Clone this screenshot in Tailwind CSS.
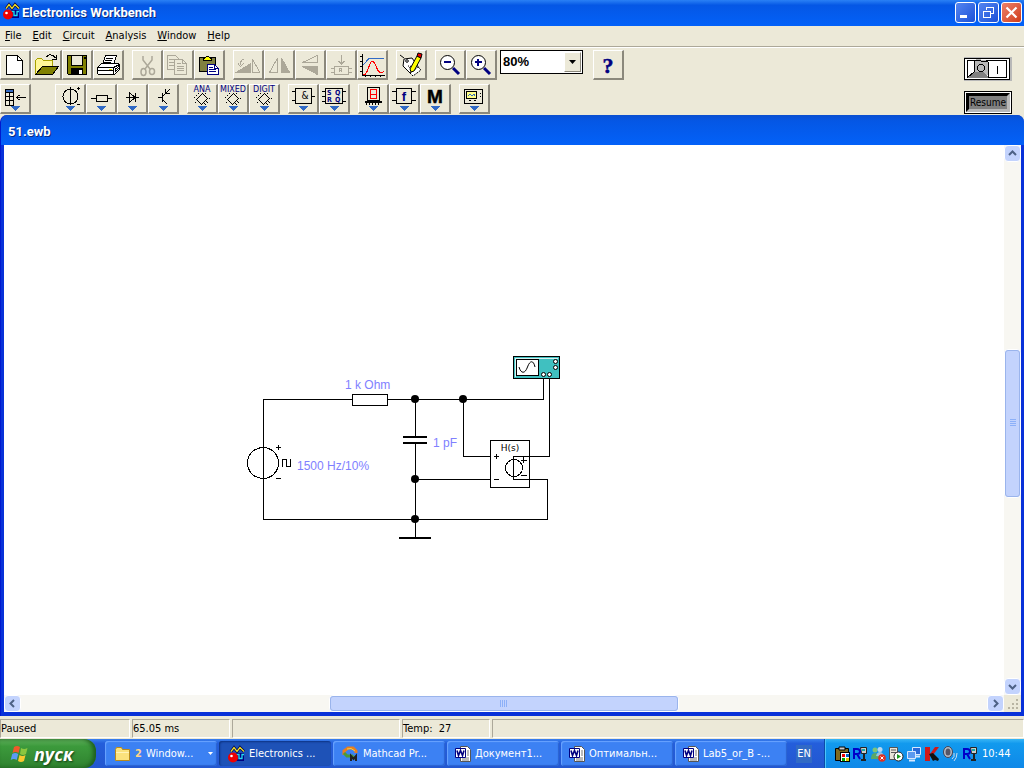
<!DOCTYPE html>
<html lang="en">
<head>
    <meta charset="UTF-8">
    <meta name="viewport" content="width=device-width, initial-scale=1.0">
    <title>Electronics Workbench</title>
    <script src="https://cdn.jsdelivr.net/npm/@tailwindcss/browser@4"></script>
</head>
<body class="h-screen flex flex-col overflow-hidden bg-[#ece9d8] text-black text-[11px] leading-[14px] font-['DejaVu_Sans_Condensed','DejaVu_Sans',sans-serif]">

    <!-- Shared symbols -->
    <svg class="hidden" aria-hidden="true">
        <symbol id="drop" viewBox="0 0 31 30"><path d="M11 22h9v1h-1v1h-1v1h-1v1h-1v1h-1v-1h-1v-1h-1v-1h-1v-1h-1z" fill="#316ac5"/></symbol>
        <symbol id="chip" viewBox="0 0 31 30">
            <g fill="none" stroke="#000" shape-rendering="crispEdges"><path d="M15.500 9.500l5 5-6 6-5-5z"/><path d="M12 10l-1-1M10 12l-1-1M8 14l-1-1M18 10l1-1M22 14l1 1M19 17l2 2M17 19l2 2M9 18l-1 1"/></g>
        </symbol>
        <symbol id="app" viewBox="0 0 18 18">
            <path d="M9 8h8v8H9z" fill="#000080"/>
            <path d="M4 6.500l3-4 3 4 3-4 4 4" fill="none" stroke="#000050" stroke-width="2.800"/>
            <path d="M4 6.500l3-4 3 4 3-4 4 4" fill="none" stroke="#f0e020" stroke-width="1.300"/>
            <path d="M9 9.500h3v4h3v-4h2" fill="none" stroke="#20e0f0" stroke-width="1.300"/>
            <circle cx="6" cy="12.500" r="5" fill="#e00"/><circle cx="4.500" cy="11" r="1.300" fill="#fff"/>
        </symbol>
        <symbol id="word" viewBox="0 0 16 16">
            <path d="M5.500.5h7l3 3v12h-10z" fill="#fff" stroke="#555"/>
            <path d="M12 5h2M12 7h2M12 9h2M7 12h7M7 14h7" stroke="#777"/>
            <path d="M.5 2.500h10v9H.5z" fill="#fff" stroke="#000080"/>
            <path d="M2 4.500l1.500 5 2-5 2 5 1.500-5" fill="none" stroke="#000080" stroke-width="1.600"/>
        </symbol>
        <symbol id="rj" viewBox="0 0 16 16">
            <path d="M8.500 1.500h6v6h-5z" fill="#ccc" stroke="#222"/><path d="M10 3h3v2h-3z" fill="#1aa"/>
            <path d="M12 8v6M9 14h5" stroke="#222" stroke-width="2"/>
            <path d="M2 13V3h3q3 0 3 2.500T5 8H2M5 8l3 5" fill="none" stroke="#0000c8" stroke-width="2"/>
        </symbol>
    </svg>

    <!-- Title bar -->
    <header class="h-[26px] shrink-0 flex items-center pl-0.5 pr-0.5 bg-linear-to-b from-[#2a80f5] via-[#0557e5] via-20% to-[#0361f8]">
        <svg class="size-[18px] mr-0.5 -mt-1" aria-hidden="true"><use href="#app"/></svg>
        <h1 class="grow text-white text-[13px] font-bold font-['Roboto',sans-serif] [text-shadow:1px_1px_#0a2a80]">Electronics Workbench</h1>
        <div class="flex gap-0.5 pb-px">
            <button aria-label="Minimize" class="size-[21px] rounded-[3px] border border-white bg-linear-to-br from-[#5585f0] to-[#1b50d8]"><svg viewBox="0 0 19 19"><path d="M4 12h7v3H4z" fill="#fff"/></svg></button>
            <button aria-label="Restore" class="size-[21px] rounded-[3px] border border-white bg-linear-to-br from-[#5585f0] to-[#1b50d8]"><svg viewBox="0 0 19 19" fill="none" stroke="#fff" shape-rendering="crispEdges"><path d="M4.500 8.500h7v6h-7zM4 8h8M7.500 7V4.500h7v6H12M7 4h8"/></svg></button>
            <button aria-label="Close" class="size-[21px] rounded-[3px] border border-white bg-linear-to-br from-[#ec8068] to-[#d03a14]"><svg viewBox="0 0 19 19"><path d="M4.500 4.500l10 10m0-10l-10 10" stroke="#fff" stroke-width="2.200"/></svg></button>
        </div>
    </header>

    <!-- Menu -->
    <nav class="h-[21px] shrink-0 flex items-center gap-[11px] pl-[5px] pb-px border-b border-[#aca899]">
        <a href="#"><u>F</u>ile</a>
        <a href="#"><u>E</u>dit</a>
        <a href="#"><u>C</u>ircuit</a>
        <a href="#"><u>A</u>nalysis</a>
        <a href="#"><u>W</u>indow</a>
        <a href="#"><u>H</u>elp</a>
    </nav>

    <!-- Toolbars -->
    <div class="shrink-0 flex justify-between border-t border-white pt-0.5 pr-3 pb-px">
        <div class="flex flex-col gap-1 [&_button]:block [&_button]:w-[31px] [&_button]:h-[30px] [&_button]:border-t [&_button]:border-l [&_button]:border-r-2 [&_button]:border-b-2 [&_button]:border-t-white [&_button]:border-l-white [&_button]:border-r-[#8b887c] [&_button]:border-b-[#8b887c] [&_button>svg]:w-[31px] [&_button>svg]:h-[30px] [&_button>svg]:-m-px [&_svg]:max-w-none [&_svg]:overflow-visible">
            <div class="flex gap-2">
                <div class="flex">
                    <button aria-label="New"><svg viewBox="0 0 31 30" shape-rendering="crispEdges"><path d="M6.500 5.500h11l5 5v14h-16z" fill="#fff" stroke="#000"/><path d="M17.500 5.500v5h5" fill="none" stroke="#000"/></svg></button>
                    <button aria-label="Open"><svg viewBox="0 0 31 30" shape-rendering="crispEdges"><path d="M4.500 24V10.500l2-2h4l2 2h9V16" fill="#fff799" stroke="#a8a000"/><path d="M4.500 24.500l7-8h16l-6 8z" fill="#808000" stroke="#000"/><path d="M15.500 7q4-5 9 1M25.500 5v4H21" fill="none" stroke="#000"/></svg></button>
                    <button aria-label="Save"><svg viewBox="0 0 31 30" shape-rendering="crispEdges"><path d="M5.500 5.500h19v19h-18l-1-1z" fill="#808000" stroke="#000"/><path d="M9.500 5.500h11v10h-11z" fill="#ece9d8" stroke="#000"/><path d="M9 18h12v7H9z" fill="#000"/><path d="M17 20h3v4h-3z" fill="#fff"/><path d="M22 7h2v2h-2z"/></svg></button>
                    <button aria-label="Print"><svg viewBox="0 0 31 30" shape-rendering="crispEdges" stroke="#000"><path d="M9.500 14.500l3-9h11l-3 9" fill="#fff"/><path d="M13 8.500h7M12 10.500h7M11 12.500h7" /><path d="M4.500 17.500l4-4h17l1 2v4l-5 5h-16l-1-1z" fill="#fff"/><path d="M4.500 17.500h16l6-3M20.500 17.500v7M5 20.500h15M22 21.500l5-4M22 19.500l5-4" fill="none"/><path d="M16 19.500h3" stroke="#dd0"/></svg></button>
                </div>
                <div class="flex">
                    <button aria-label="Cut"><svg viewBox="0 0 31 30" fill="none" stroke="#aca899" stroke-width="1.500"><path d="M11 6v4l7 9M20 6v4l-7 9"/><ellipse cx="11.500" cy="22" rx="2.500" ry="3.500"/><ellipse cx="20" cy="21.500" rx="2.500" ry="3"/></svg></button>
                    <button aria-label="Copy"><svg viewBox="0 0 31 30" fill="#ece9d8" stroke="#aca899" shape-rendering="crispEdges"><path d="M4.500 5.500h8l4 4v10h-12zM6 9.500h5M6 12.500h7M6 15.500h7"/><path d="M11.500 9.500h8l4 4v11h-12zM19.500 9.500v4h4M14 13.500h4M14 16.500h7M14 18.500h7M14 20.500h7"/></svg></button>
                    <button aria-label="Paste"><svg viewBox="0 0 31 30" shape-rendering="crispEdges"><path d="M5.500 7.500h16v14h-16z" fill="#808040" stroke="#000"/><path d="M9.500 10.500v-2l2-1 1-1h2l1 1 2 1v2z" fill="#ff0" stroke="#000"/><path d="M13.500 14.500h7l4 4v6h-11z" fill="#fff" stroke="#000080"/><path d="M20.500 14.500v4h4M15 17.500h4M15 19.500h7M15 21.500h7" stroke="#000080" fill="none"/></svg></button>
                </div>
                <div class="flex">
                    <button aria-label="Rotate"><svg viewBox="0 0 31 30" fill="none" stroke="#aca899" shape-rendering="crispEdges"><path d="M4 22l13-8v8z" fill="#aca899"/><path d="M19.500 22V9l7 13zM11 9.500H9.500L7.500 12v3M5 13.500l2.500 3 3-3"/></svg></button>
                    <button aria-label="Flip horizontal"><svg viewBox="0 0 31 30" fill="none" stroke="#aca899" shape-rendering="crispEdges"><path d="M13.500 8v14.500h-8z"/><path d="M17.500 8v14.500h8z" fill="#aca899"/></svg></button>
                    <button aria-label="Flip vertical"><svg viewBox="0 0 31 30" fill="none" stroke="#aca899" shape-rendering="crispEdges"><path d="M22.500 5.500v7h-15z"/><path d="M22.500 24.500v-8h-15z" fill="#aca899"/></svg></button>
                    <button aria-label="Create subcircuit"><svg viewBox="0 0 31 30" fill="none" stroke="#aca899" shape-rendering="crispEdges"><path d="M15.500 5v9M12.500 11l3 3 3-3M8.500 16.500h14v8h-14zM5 18.500h3M5 22.500h3M23 18.500h3M23 22.500h3M13.500 22v-4h2v4M13 20.500h3"/></svg></button>
                    <button aria-label="Display graphs"><svg viewBox="0 0 31 30" fill="none" shape-rendering="crispEdges"><path d="M5.500 4v21.500H28M3 6.500h2M3 11.500h2M3 16.500h2M3 21.500h2M8.500 25v2M13.500 25v2M18.500 25v2M23.500 25v2" stroke="#000"/><path d="M6 15l6-6.500h15" stroke="#316ac5"/><path d="M6 24.500h2q2-2 4-8t4-5 4 7 7 3" stroke="#f00"/></svg></button>
                </div>
                <button aria-label="Component properties"><svg viewBox="0 0 31 30" stroke="#000"><path d="M4 5l4 3" /><path d="M8 9l8-1 7 10-8 6-8-8z" fill="#fff"/><circle cx="11" cy="11" r="1.300" fill="#fff"/><path d="M12 16l8 1M13 18l6-5" stroke-dasharray="1 1"/><path d="M14 23l8-6 3 3-8 6z" fill="#fff" stroke-dasharray="2 1"/><path d="M21 6l4 2-7 13-3 1-1-3z" fill="#ff0"/><path d="M21 6l1-3 4 1-1 4z" fill="#e00"/></svg></button>
                <div class="flex">
                    <button aria-label="Zoom out"><svg viewBox="0 0 31 30"><path d="M18 18l6 6" stroke="#000080" stroke-width="3"/><circle cx="12.500" cy="12.500" r="7" fill="#fff" stroke="#000"/><path d="M9 12h7" stroke="#000080" stroke-width="2"/></svg></button>
                    <button aria-label="Zoom in"><svg viewBox="0 0 31 30"><path d="M18 18l6 6" stroke="#000080" stroke-width="3"/><circle cx="12.500" cy="12.500" r="7" fill="#fff" stroke="#000"/><path d="M9 12h7M12 9v7" stroke="#000080" stroke-width="2"/></svg></button>
                </div>
                <div class="relative w-[83px] h-6 -ml-[5px]">
                    <select aria-label="Zoom level" class="block appearance-none w-full h-full bg-white border border-black pl-0.5 text-[13px] font-bold font-['Liberation_Sans',sans-serif]">
                        <option>80%</option>
                        <option>100%</option>
                    </select>
                    <span class="absolute top-0.5 right-0.5 w-[17px] h-5 flex items-center justify-center bg-[#ece9d8] border border-l-white border-t-white border-r-[#8b887c] border-b-[#8b887c] pointer-events-none"><svg class="w-[7px] h-1" viewBox="0 0 7 4"><path d="M0 0h7L3.500 4z"/></svg></span>
                </div>
                <button aria-label="Help" class="ml-0.5"><svg viewBox="0 0 31 30"><text x="15" y="23" text-anchor="middle" fill="#000080" stroke="#000080" stroke-width="0.500" class="text-[22px] font-bold font-['Liberation_Serif',serif]">?</text></svg></button>
            </div>

            <div class="flex gap-2">
                <button aria-label="Favorites" class="mr-4"><svg viewBox="0 0 31 30" shape-rendering="crispEdges"><path d="M5 5h9v3H5z" fill="#316ac5"/><path d="M5.500 5.500h8v16h-8zM5 8.500h9M5 12.500h9M5 16.500h9M9.500 8v14M17 13.500h9M19.500 11l-3 2.500 3 2.500" fill="none" stroke="#000"/><use href="#drop"/></svg></button>
                <div class="flex">
                    <button aria-label="Sources"><svg viewBox="0 0 31 30"><g fill="none" stroke="#000" shape-rendering="crispEdges"><circle cx="15.500" cy="12.500" r="7.500"/><path d="M15.500 3v18M22 4.500h3M23.500 3v3M22 20.500h3"/></g><use href="#drop"/></svg></button>
                    <button aria-label="Basic"><svg viewBox="0 0 31 30" shape-rendering="crispEdges"><path d="M10.500 11.500h11v6h-11zM5 14.500h5M22 14.500h4" fill="none" stroke="#000"/><use href="#drop"/></svg></button>
                    <button aria-label="Diodes"><svg viewBox="0 0 31 30"><path d="M9 13.500h13M12.500 9v9l6-4.500zM18.500 9v9" fill="none" stroke="#000" shape-rendering="crispEdges"/><use href="#drop"/></svg></button>
                    <button aria-label="Transistors"><svg viewBox="0 0 31 30"><path d="M10 13.500h4M14.500 9v9M15 12l5-5M15 16l4 4M17.500 5v4H22M20 7l2-2" fill="none" stroke="#000" shape-rendering="crispEdges"/><use href="#drop"/></svg></button>
                </div>
                <div class="flex text-[8px] [&_text]:fill-[#000080] font-['DejaVu_Sans',sans-serif]">
                    <button aria-label="Analog ICs"><svg viewBox="0 0 31 30"><text x="15" y="8" text-anchor="middle">ANA</text><use href="#chip"/><use href="#drop"/></svg></button>
                    <button aria-label="Mixed ICs"><svg viewBox="0 0 31 30"><text x="15" y="8" text-anchor="middle">MIXED</text><use href="#chip"/><use href="#drop"/></svg></button>
                    <button aria-label="Digital ICs"><svg viewBox="0 0 31 30"><text x="15" y="8" text-anchor="middle">DIGIT</text><use href="#chip"/><use href="#drop"/></svg></button>
                </div>
                <div class="flex">
                    <button aria-label="Logic gates"><svg viewBox="0 0 31 30" shape-rendering="crispEdges"><path d="M7.500 4.500h16v15h-16zM4 7.500h3M4 16.500h3M24 12.500h3" fill="none" stroke="#000"/><text x="17" y="15" text-anchor="middle" class="text-[10px]">&amp;</text><use href="#drop"/></svg></button>
                    <button aria-label="Digital"><svg viewBox="0 0 31 30" shape-rendering="crispEdges"><path d="M6.500 4.500h17v15h-17zM3 7.500h3M3 12.500h3M3 17.500h3M24 7.500h3M24 17.500h3" fill="none" stroke="#000"/><g fill="#000080" class="text-[7px] font-bold"><text x="8" y="11">S</text><text x="16" y="11">Q</text><text x="8" y="18">R</text><text x="16" y="18">Q</text></g><use href="#drop"/></svg></button>
                </div>
                <div class="flex">
                    <button aria-label="Indicators"><svg viewBox="0 0 31 30" shape-rendering="crispEdges" fill="none"><path d="M9.500 3.500h12v13h-12z" stroke="#000"/><path d="M12.500 5.500h6v9h-6zM13 10.500h6" stroke="#f00"/><path d="M7 18h17" stroke="#000" stroke-width="2"/><path d="M8.500 19v2M11.500 19v2M14.500 19v2M17.500 19v2M20.500 19v2" stroke="#000"/><use href="#drop"/></svg></button>
                    <button aria-label="Controls"><svg viewBox="0 0 31 30" shape-rendering="crispEdges"><path d="M7.500 4.500h15v15h-15zM3 7.500h4M3 16.500h4M23 7.500h4M23 16.500h4" fill="none" stroke="#000"/><text x="15" y="17" text-anchor="middle" fill="#000080" class="text-[13px] font-bold font-['Liberation_Sans',sans-serif]">f</text><use href="#drop"/></svg></button>
                    <button aria-label="Miscellaneous"><svg viewBox="0 0 31 30"><text x="15" y="19" text-anchor="middle" stroke="#000" stroke-width="0.500" class="text-[19px] font-bold font-['Liberation_Sans',sans-serif]">M</text><use href="#drop"/></svg></button>
                </div>
                <button aria-label="Instruments"><svg viewBox="0 0 31 30" shape-rendering="crispEdges"><path d="M5.500 5.500h18v14h-18z" fill="none" stroke="#000"/><path d="M7.500 7.500h10v7h-10z" fill="#ff8" stroke="#000"/><path d="M9 12l2-2 2 2 2-2 1 2" fill="none" stroke="#316ac5"/><path d="M21 9h1v1h-1zM21 12h1v1h-1zM10 16h2v1h-2zM15 16h2v1h-2z"/><use href="#drop"/></svg></button>
            </div>
        </div>

        <div class="flex flex-col justify-between items-end w-12 pt-[7px]">
            <button aria-label="Activate simulation" class="w-12 h-6"><svg viewBox="0 0 48 24" shape-rendering="crispEdges"><path d="M0 0h48v24H0z" fill="#b8b8b8"/><path d="M.5 1.500h45v21H.5z" fill="#fff" stroke="#000"/><path d="M3.500 3.500h39v17h-39z" fill="#fff" stroke="#000"/><path d="M10 3l4-1 10 2v14l-3 2H10z" fill="#b8b8b8"/><path d="M4 20l7-5h8l5 4v2H4z" fill="#808080"/><path d="M4 20l6-5V3M10 3l14 2v15" fill="none" stroke="#000"/><circle cx="17" cy="11" r="3.500" fill="none" stroke="#000"/><path d="M33.500 9v8" stroke="#000"/></svg></button>
            <button class="w-12 h-[23px] bg-white border border-black p-px"><span class="flex h-full items-center justify-center bg-[#808080] border-[3px] border-t-black border-l-black border-r-[#b8b8b8] border-b-[#b8b8b8] whitespace-nowrap text-[10px]">Resume</span></button>
        </div>
    </div>

    <!-- Circuit window -->
    <main class="grow min-h-0 flex flex-col rounded-t-[7px] bg-[#0831d9] px-[3px] pb-1 border-l border-[#0019cf]">
        <h2 class="h-[30px] shrink-0 -mx-[3px] pl-[7px] pt-1 flex items-center rounded-t-[7px] bg-linear-to-b from-[#0a4fd0] via-[#0557e5] via-20% to-[#0361f8] text-white text-[13px] font-bold font-['Roboto',sans-serif] [text-shadow:1px_1px_#0a2a80]">51.ewb</h2>
        <div class="grow min-h-0 flex">
            <div class="grow relative bg-white overflow-hidden">
                <svg class="absolute left-[236px] top-[205px] w-[330px] h-[200px]" viewBox="240 350 330 200" fill="none" stroke="#000" role="img" aria-label="Circuit diagram">
                    <!-- wires -->
                    <g shape-rendering="crispEdges">
                        <path d="M352 399.500h-88.500v120h284v-40h-34v-23h36V378M388 399.500h155.500V378M463.500 399.500v57H490M415.500 399v37M415.500 444v94M415.500 479.500H490"/>
                        <path d="M352.500 394.500h35v11h-35zM490.500 440.500h39v47h-39z"/>
                        <path d="M403 437h24M403 443h24M399 538h32" stroke-width="2"/>
                        <path d="M276 447.500h5M278.500 445v5M276 478.500h5M282.500 467v-7.500h4v7h4V459M494 456.500h5M496.500 454v5M494 479.500h5M521 460.500h6M523.500 457v6M521 475.500h6"/>
                        <circle cx="263" cy="463" r="15.500"/>
                        <circle cx="514" cy="468" r="8.500"/>
                    </g>
                    <g fill="#000" stroke="none">
                        <circle cx="415" cy="399" r="4"/>
                        <circle cx="463" cy="399" r="4"/>
                        <circle cx="415" cy="479" r="4"/>
                        <circle cx="415" cy="519" r="4"/>
                    </g>
                    <!-- oscilloscope -->
                    <path d="M513.500 356.500h46v22h-46z" fill="#40c0c0" shape-rendering="crispEdges"/>
                    <path d="M515 377V358h43" stroke="#d8f0f0" shape-rendering="crispEdges"/>
                    <path d="M516.500 359.500h22v16h-22z" fill="#fff" shape-rendering="crispEdges"/>
                    <path d="M519 367c2 7 6 7 8.500 0s6-7 7.500 0"/>
                    <g fill="#fff">
                        <circle cx="543.500" cy="374.500" r="2"/>
                        <circle cx="549.500" cy="374.500" r="2"/>
                        <circle cx="555.500" cy="361.500" r="2"/>
                        <circle cx="555.500" cy="367.500" r="2"/>
                    </g>
                    <g stroke="none" fill="#8080ff" class="text-[12px] font-['Liberation_Sans',sans-serif]">
                        <text x="345" y="389">1 k Ohm</text>
                        <text x="433" y="447">1 pF</text>
                        <text x="297" y="470">1500 Hz/10%</text>
                    </g>
                    <text x="510" y="451" text-anchor="middle" stroke="none" fill="#000" class="text-[9px] font-['DejaVu_Sans',sans-serif]">H(s)</text>
                </svg>
            </div>
            <!-- vertical scroll -->
            <div class="w-[17px] shrink-0 flex flex-col bg-[#f8f7f2]">
                <button aria-label="Scroll up" class="h-[17px] rounded-sm border border-white bg-[#c3d3fd]"><svg viewBox="0 0 15 15"><path d="M4 9l3.500-3.500L11 9" fill="none" stroke="#4d6185" stroke-width="2"/></svg></button>
                <div class="grow-[188] basis-0"></div>
                <div class="grow-[148] basis-0 rounded-sm border border-white outline outline-[#9ab4ec] -outline-offset-2 bg-[#c3d3fd] flex items-center justify-center"><svg class="size-2" viewBox="0 0 8 8" shape-rendering="crispEdges"><path d="M1 .5h6M1 2.500h6M1 4.500h6M1 6.500h6" stroke="#8cb0f8"/></svg></div>
                <div class="grow-[181] basis-0"></div>
                <button aria-label="Scroll down" class="h-[17px] rounded-sm border border-white bg-[#c3d3fd]"><svg viewBox="0 0 15 15"><path d="M4 6l3.500 3.500L11 6" fill="none" stroke="#4d6185" stroke-width="2"/></svg></button>
            </div>
        </div>
        <!-- horizontal scroll -->
        <div class="h-[17px] shrink-0 flex bg-[#f8f7f2]">
            <button aria-label="Scroll left" class="w-[17px] rounded-sm border border-white bg-[#c3d3fd]"><svg viewBox="0 0 15 15"><path d="M9 4L5.500 7.500 9 11" fill="none" stroke="#4d6185" stroke-width="2"/></svg></button>
            <div class="grow-[309] basis-0"></div>
            <div class="grow-[348] basis-0 rounded-sm border border-white outline outline-[#9ab4ec] -outline-offset-2 bg-[#c3d3fd] flex items-center justify-center"><svg class="size-2" viewBox="0 0 8 8" shape-rendering="crispEdges"><path d="M.5 0v7M2.500 0v7M4.500 0v7M6.500 0v7" stroke="#8cb0f8"/></svg></div>
            <div class="grow-[309] basis-0"></div>
            <button aria-label="Scroll right" class="w-[17px] rounded-sm border border-white bg-[#c3d3fd]"><svg viewBox="0 0 15 15"><path d="M6 4l3.500 3.500L6 11" fill="none" stroke="#4d6185" stroke-width="2"/></svg></button>
            <svg class="size-[17px] bg-[#ece9d8]" viewBox="0 0 17 17" shape-rendering="crispEdges"><path d="M12 4h2v2h-2zM8 8h2v2H8zM12 8h2v2h-2zM4 12h2v2H4zM8 12h2v2H8zM12 12h2v2h-2z" fill="#b8b4a2"/></svg>
        </div>
    </main>

    <!-- Status bar -->
    <footer class="h-[23px] shrink-0 flex gap-0.5 pt-[3px] pb-px [&>div]:border [&>div]:border-t-[#aca899] [&>div]:border-l-[#aca899] [&>div]:border-r-white [&>div]:border-b-white [&>div]:pt-0.5">
        <div class="w-[130px]">Paused</div>
        <div class="w-[98px]">65.05 ms</div>
        <div class="w-[168px]"></div>
        <div class="w-[88px] whitespace-pre">Temp:  27</div>
        <div class="grow"></div>
    </footer>

    <!-- Taskbar -->
    <div class="h-[29px] shrink-0 flex text-white bg-linear-to-b from-[#3a80ee] via-[#245edb] via-15% to-[#2357d0]">
        <button class="w-24 flex items-center gap-1 pl-2.5 rounded-r-xl bg-linear-to-b from-[#5fb05c] via-[#3c9a3c] via-25% to-[#2f822f] shadow-[inset_-3px_0_4px_#1d5c1d] text-[18px] italic font-bold font-['Open_Sans',sans-serif] [text-shadow:1px_1px_2px_#143c14]">
            <svg class="size-[20px]" viewBox="0 0 20 20"><path d="M4 3q3-2 6 0L8.500 9q-3-2-6 0z" fill="#f0592b"/><path d="M11 4q3 2 6.500 0L16 10q-3 2-6 0z" fill="#8cc63f"/><path d="M2.200 10q3-2 6 0L6.700 16q-3-2-6 0z" fill="#5b9bf5"/><path d="M9.500 11q3 2 6 0L14 17q-3 2-6 0z" fill="#fbc82f"/></svg>
            пуск
        </button>
        <div class="grow flex gap-0.5 ml-[9px] pt-0.5 pb-0.5 min-w-0 [&>button]:w-28 [&>button]:flex [&>button]:items-center [&>button]:gap-1 [&>button]:pl-2 [&>button]:rounded-[3px] [&>button]:bg-[#3c81f3] [&>button]:whitespace-nowrap [&>button]:shadow-[inset_1px_1px_1px_#6aa4ff,inset_-1px_-1px_1px_#2a62d0] [&_svg]:shrink-0">
            <button><svg class="size-4 ml-0.5" viewBox="0 0 16 16"><path d="M.5 3.500l1-2h5l1 2h7v11H.5z" fill="#fbe27c" stroke="#b88a1c"/><path d="M1 6.500h13" stroke="#fff3b8"/></svg><b class="text-[#ffd48a]">2</b> <span class="grow text-left">Window...</span><svg class="w-[5px] h-[3px] mr-1" viewBox="0 0 5 3"><path d="M0 0h5L2.500 3z" fill="#fff"/></svg></button>
            <button class="bg-[#1e52b7]! shadow-[inset_1px_1px_2px_#0d3383]!"><svg class="size-[18px]"><use href="#app"/></svg>Electronics ...</button>
            <button><svg class="size-[18px]" viewBox="0 0 18 18" fill="none"><path d="M3 10V6l4-3h5l3 3v2" stroke="#e87d20" stroke-width="3"/><path d="M3 8l3 3h5l3 3" stroke="#4a9a3a" stroke-width="3"/><path d="M6 4q4-2 8 2" stroke="#f5d040"/><path d="M10 16v-5l2.500 3 2.500-3v5" stroke="#222" stroke-width="2"/></svg>Mathcad Pr...</button>
            <button><svg class="size-4"><use href="#word"/></svg>Документ1...</button>
            <button><svg class="size-4"><use href="#word"/></svg>Оптимальн...</button>
            <button><svg class="size-4"><use href="#word"/></svg>Lab5_or_B -...</button>
        </div>
        <div class="flex items-center pr-3"><span class="bg-[#316ac5] px-px py-0.5">EN</span></div>
        <div class="w-[200px] flex items-center gap-0.5 pl-[9px] border-l border-[#0c4ba8] bg-linear-to-b from-[#35b5f5] via-[#129aee] via-15% to-[#0f88e8] shadow-[inset_1px_0_#4cc4fa]">
            <svg class="size-4" viewBox="0 0 16 16"><path d="M1.500 2.500h13v12h-13z" fill="#806a20" stroke="#000"/><path d="M5 1h6v3H5z" fill="#ccc" stroke="#000"/><path d="M6 6h10v10H6z" fill="#000"/><path d="M7 7h8v8H7z" fill="#fff"/><path d="M8 8h3v3H8z" fill="#e00"/><path d="M12 8h3v3h-3z" fill="#06c"/><path d="M8 12h3v3H8z" fill="#0a0"/><path d="M12 12h3v3h-3z" fill="#dc0"/></svg>
            <svg class="size-4"><use href="#rj"/></svg>
            <svg class="size-4" viewBox="0 0 16 16"><circle cx="5" cy="4" r="2.500" fill="#7cc47a"/><path d="M1 13q0-6 4-6t5 6z" fill="#5aa868"/><circle cx="10" cy="3.500" r="2.500" fill="#b8d8f0"/><path d="M6 10q1-4 4-4t4 5z" fill="#98c4e4"/><circle cx="12" cy="12" r="3.800" fill="#e03020"/><path d="M10.500 10.500l3 3m0-3l-3 3" stroke="#fff"/></svg>
            <svg class="size-4" viewBox="0 0 16 16"><path d="M1.500 1.500h8v12h-8z" fill="#e8e4d8" stroke="#555"/><path d="M3 4h5M3 6.500h5" stroke="#555"/><circle cx="10.500" cy="10.500" r="4.500" fill="#fff" stroke="#222"/><path d="M9 8l4 2.500L9 13z" fill="#1a9a1a"/></svg>
            <svg class="size-4" viewBox="0 0 16 16" stroke="#d8e8ff"><path d="M6.500 1.500h8v7h-8z" fill="#2a6ad8"/><path d="M1.500 5.500h8v7h-8z" fill="#5a9af0"/><path d="M3 14.500h6M10 10.500h4" stroke-width="2"/></svg>
            <svg class="size-4" viewBox="0 0 16 16"><path d="M1 1h5v14H1z" fill="#d01818"/><path d="M6 8l5-7h4l-6 8z" fill="#d01818"/><path d="M5 8l4-1 6 6-1 2-3-1-2 1z" fill="#111"/></svg>
            <svg class="size-4" viewBox="0 0 16 16" fill="none"><ellipse cx="6" cy="6" rx="4.500" ry="5.500" fill="#b8bcc4" stroke="#445"/><ellipse cx="6" cy="6" rx="2.500" ry="3.500" fill="#556"/><path d="M10 13q3-2 2-6M12 15q3-3 3-8" stroke="#cde"/></svg>
            <svg class="size-4 ml-0.5"><use href="#rj"/></svg>
            <time class="ml-0.5">10:44</time>
        </div>
    </div>
</body>
</html>
